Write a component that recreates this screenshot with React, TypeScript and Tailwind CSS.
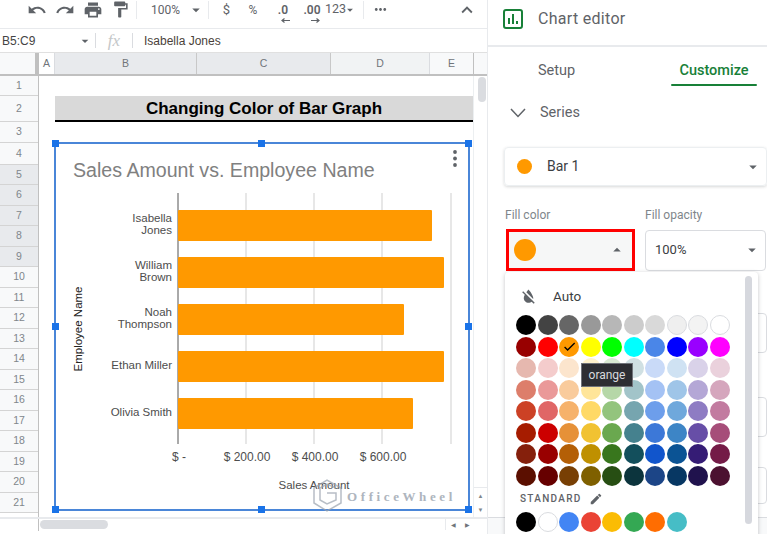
import React from "react";
import { MdUndo, MdRedo, MdPrint, MdFormatPaint, MdFormatColorReset, MdEdit, MdKeyboardArrowUp, MdMoreHoriz, MdCheck, MdArrowDropDown, MdArrowDropUp } from "react-icons/md";

const palette = [
  ["#000000","#434343","#666666","#999999","#b7b7b7","#cccccc","#d9d9d9","#efefef","#f3f3f3","#ffffff"],
  ["#980000","#ff0000","#ff9900","#ffff00","#00ff00","#00ffff","#4a86e8","#0000ff","#9900ff","#ff00ff"],
  ["#e6b8af","#f4cccc","#fce5cd","#fff2cc","#d9ead3","#d0e0e3","#c9daf8","#cfe2f3","#d9d2e9","#ead1dc"],
  ["#dd7e6b","#ea9999","#f9cb9c","#ffe599","#b6d7a8","#a2c4c9","#a4c2f4","#9fc5e8","#b4a7d6","#d5a6bd"],
  ["#cc4125","#e06666","#f6b26b","#ffd966","#93c47d","#76a5af","#6d9eeb","#6fa8dc","#8e7cc3","#c27ba0"],
  ["#a61c00","#cc0000","#e69138","#f1c232","#6aa84f","#45818e","#3c78d8","#3d85c6","#674ea7","#a64d79"],
  ["#85200c","#990000","#b45f06","#bf9000","#38761d","#134f5c","#1155cc","#0b5394","#351c75","#741b47"],
  ["#5b0f00","#660000","#783f04","#7f6000","#274e13","#0c343d","#1c4587","#073763","#20124d","#4c1130"],
];
const standard = ["#000000","#ffffff","#4285f4","#ea4335","#fbbc04","#34a853","#ff6d01","#46bdc6"];

const rows = [
  [1,20],[2,26],[3,21],[4,22],[5,20],[6,21],[7,20],[8,21],[9,20],[10,21],[11,20],[12,21],[13,20],[14,21],[15,20],[16,21],[17,20],[18,21],[19,20],[20,21],[21,20],
];

const bars = [
  [210, 432, ["Isabella", "Jones"]],
  [257, 444, ["William", "Brown"]],
  [304, 404, ["Noah", "Thompson"]],
  [351, 444, ["Ethan Miller"]],
  [398, 413, ["Olivia Smith"]],
] as const;

function Swatch({ color, check }: { color: string; check?: boolean }) {
  const light = color === "#ffffff" || color === "#f3f3f3" || color === "#efefef";
  return (
    <div
      className={`w-5 h-5 rounded-full flex items-center justify-center ${light ? "border border-[#dadce0]" : ""}`}
      style={{ backgroundColor: color }}
    >
      {check && <MdCheck className="text-[15px] text-black" />}
    </div>
  );
}

function Handle({ pos }: { pos: string }) {
  return <div className={`absolute w-[7px] h-[7px] bg-[#1a73e8] ${pos}`} />;
}

function DecimalIcon({ label, dir }: { label: string; dir: "left" | "right" }) {
  return (
    <div className="relative flex items-center justify-center text-[12px] font-semibold text-[#5f6368]">
      {label}
      <svg viewBox="0 0 9 5" className={`absolute -bottom-[4px] w-[9px] h-[5px] ${dir === "left" ? "left-[3px]" : "right-[1px]"}`}>
        {dir === "left" ? (
          <path d="M9 2.5H1.5M3.5 0.5L1 2.5L3.5 4.5" fill="none" stroke="#5f6368" strokeWidth="1.2" />
        ) : (
          <path d="M0 2.5H7.5M5.5 0.5L8 2.5L5.5 4.5" fill="none" stroke="#5f6368" strokeWidth="1.2" />
        )}
      </svg>
    </div>
  );
}

function ChartSvg() {
  return (
    <svg viewBox="55 143 414 367" className="absolute inset-0 w-full h-full overflow-visible">
      {[246, 314, 382, 451].map((x) => (
        <line key={x} x1={x} x2={x} y1={193} y2={444} stroke="#cfcfcf" strokeWidth="1" />
      ))}
      <line x1={178} x2={178} y1={193} y2={444} stroke="#555" strokeWidth="1" />
      {bars.map(([y, end, label]) => (
        <g key={y}>
          <rect x={178} y={y} width={end - 178} height={31} fill="#ff9900" rx="1" />
          {label.map((t, i) => (
            <text
              key={t}
              x={172}
              y={label.length === 1 ? y + 18 : y + 12 + i * 12}
              textAnchor="end"
              fontSize="11.5"
              fontFamily="Liberation Sans, sans-serif"
              fill="#4d4d4d"
            >
              {t}
            </text>
          ))}
        </g>
      ))}
      {[["$ -", 179], ["$ 200.00", 247], ["$ 400.00", 315], ["$ 600.00", 383]].map(([t, x]) => (
        <text key={t} x={x} y={461} textAnchor="middle" fontSize="12" fontFamily="Liberation Sans, sans-serif" fill="#4d4d4d">
          {t}
        </text>
      ))}
      <text x={73} y={177} fontSize="19.6" fontFamily="Liberation Sans, sans-serif" fill="#808080">
        Sales Amount vs. Employee Name
      </text>
      <text x={314} y={489} textAnchor="middle" fontSize="11.5" fontFamily="Liberation Sans, sans-serif" fill="#4d4d4d">
        Sales Amount
      </text>
      <text
        transform="translate(82 329) rotate(-90)"
        textAnchor="middle"
        fontSize="11.5"
        fontFamily="Liberation Sans, sans-serif"
        fill="#222"
      >
        Employee Name
      </text>
      <circle cx={455} cy={152} r={1.9} fill="#5f6368" />
      <circle cx={455} cy={158.5} r={1.9} fill="#5f6368" />
      <circle cx={455} cy={165} r={1.9} fill="#5f6368" />
      <g fill="none" stroke="#9aa3ae" strokeWidth="1.5" opacity="0.7">
        <path d="M314 488 L327 480 L341 488 L341 503 L327 511 L314 503 Z" />
        <path d="M336 488 L327 484 L320 488 L320 500 L327 504 L336 500 L336 493 L327 493" />
      </g>
      <text x={347} y={501} fontSize="13" letterSpacing="3.6" fontFamily="Liberation Serif, serif" fontWeight="700" fill="#9aa3ae" opacity="0.8">
        OfficeWheel
      </text>
    </svg>
  );
}

export default function App() {
  const tb = "flex items-center justify-center text-[#5f6368] shrink-0";
  return (
    <div className="flex w-[767px] h-[534px] overflow-hidden bg-white font-['Roboto',sans-serif]">
      {/* Sheet */}
      <div className="w-[487px] h-full flex flex-col shrink-0">
        <div className="h-[29px] flex items-center pb-[9px] pl-[23px] border-b border-[#e8eaed] shrink-0">
          <div className={`${tb} w-[28px]`}><MdUndo className="text-[20px]" /></div>
          <div className={`${tb} w-[28px]`}><MdRedo className="text-[20px]" /></div>
          <div className={`${tb} w-[27px]`}><MdPrint className="text-[20px]" /></div>
          <div className={`${tb} w-[28px]`}><MdFormatPaint className="text-[19px]" /></div>
          <div className="w-px h-[18px] bg-[#e8eaed] ml-[2px] shrink-0" />
          <div className="w-[50px] pl-[14px] text-[12px] text-[#5f6368] shrink-0">100%</div>
          <MdArrowDropDown className="text-[18px] text-[#5f6368] shrink-0" />
          <div className="w-px h-[18px] bg-[#e8eaed] ml-[3px] shrink-0" />
          <div className={`${tb} w-[35px] text-[13px]`}>$</div>
          <div className={`${tb} w-[18px] text-[12px]`}>%</div>
          <div className={`${tb} w-[42px]`}><DecimalIcon label=".0" dir="left" /></div>
          <div className={`${tb} w-[16px]`}><DecimalIcon label=".00" dir="right" /></div>
          <div className={`${tb} w-[24px] text-[12.5px] pl-[7px]`}>123</div>
          <MdArrowDropDown className="text-[14px] text-[#5f6368] -ml-[1px] shrink-0" />
          <div className="w-px h-[18px] bg-[#e8eaed] ml-[6px] shrink-0" />
          <MdMoreHoriz className="text-[17px] text-[#5f6368] ml-[8px] shrink-0" />
          <MdKeyboardArrowUp className="text-[22px] text-[#5f6368] ml-[67px] shrink-0" />
        </div>
        <div className="h-[24px] flex items-center border-b border-[#e0e0e0] text-[12px] text-[#444] shrink-0 font-['Liberation_Sans',sans-serif]">
          <div className="w-[95px] pl-[2px] flex items-center justify-between pr-[2px]">
            <span>B5:C9</span>
            <MdArrowDropDown className="text-[16px] text-[#5f6368]" />
          </div>
          <div className="w-px h-[15px] bg-[#dadce0]" />
          <div className="w-[36px] text-center font-['Liberation_Serif',serif] italic text-[17px] text-[#c4c7c9]">fx</div>
          <div className="w-px h-[15px] bg-[#dadce0]" />
          <div className="pl-[11px] text-[#4a3f3a]">Isabella Jones</div>
        </div>
        <div className="h-[23px] flex text-[10.5px] text-[#70757a] border-b-2 border-[#c0c0c0] shrink-0 font-['Liberation_Sans',sans-serif]">
          <div className="w-[39px] bg-[#f8f9fa] border-r-[4px] border-[#c0c0c0]" />
          <div className="w-[16px] flex items-center justify-center border-r border-[#dadce0]">A</div>
          <div className="w-[142px] flex items-center justify-center bg-[#e8eaed] border-r border-[#c8c8c8]">B</div>
          <div className="w-[134px] flex items-center justify-center bg-[#e8eaed] border-r border-[#c8c8c8]">C</div>
          <div className="w-[99px] flex items-center justify-center bg-[#f1f3f4] border-r border-[#dadce0]">D</div>
          <div className="w-[44px] flex items-center justify-center bg-[#f8f9fa] border-r border-[#c0c0c0]">E</div>
          <div className="flex-1 bg-[#f8f9fa]" />
        </div>
        <div className="flex h-[441px] shrink-0">
          <div className="w-[39px] border-r border-[#c0c0c0] shrink-0 text-[10.5px] text-[#80868b] font-['Liberation_Sans',sans-serif]">
            {rows.map(([n, h]) => (
              <div
                key={n}
                className={`flex items-center justify-center border-b border-[#d4d4d4] ${n >= 5 && n <= 9 ? "bg-[#e8eaed]" : "bg-[#f8f9fa]"}`}
                style={{ height: h }}
              >
                {n}
              </div>
            ))}
          </div>
          <div className="relative w-[434px] shrink-0 bg-white">
            <div className="ml-[16px] w-[418px] mt-[20px] h-[26px] pt-[2px] bg-[#d9d9d9] border-b-2 border-black flex items-center justify-center text-[17px] font-bold text-black font-['Liberation_Sans',sans-serif]">
              Changing Color of Bar Graph
            </div>
            <div className="absolute left-[16px] top-[67px] w-[414px] h-[367px]">
              <div className="absolute -inset-[1px] border-2 border-[#4a86d8]" />
              <ChartSvg />
              <Handle pos="-left-[3px] -top-[3px]" />
              <Handle pos="left-[203px] -top-[3px]" />
              <Handle pos="-right-[3px] -top-[3px]" />
              <Handle pos="-left-[3px] top-[180px]" />
              <Handle pos="-right-[3px] top-[180px]" />
              <Handle pos="-left-[3px] -bottom-[3px]" />
              <Handle pos="left-[203px] -bottom-[3px]" />
              <Handle pos="-right-[3px] -bottom-[3px]" />
            </div>
          </div>
          <div className="flex-1 flex flex-col border-l border-[#eceff1] bg-white relative">
            <div className="mt-[1px] ml-[4px] w-[8px] h-[25px] rounded-full bg-[#dadce0]" />
            <div className="mt-auto h-[30px] border-t border-[#e8eaed] flex flex-col items-center justify-around text-[#80868b] text-[6px]">
              <span>▲</span>
              <span>▼</span>
            </div>
          </div>
        </div>
        <div className="flex-1 flex items-start border-t-2 border-[#e8eaed] bg-white">
          <div className="w-[39px] h-[12px] border-r border-[#c0c0c0]" />
          <div className="ml-[1px] mt-[1px] w-[68px] h-[9px] rounded-full bg-[#dadce0]" />
          <div className="ml-auto flex w-[30px] mr-[12px] h-[11px] items-center justify-around text-[6px] text-[#70757a] border-l border-[#e8eaed]">
            <span>◀</span>
            <span>▶</span>
          </div>
        </div>
      </div>

      {/* Panel */}
      <div className="relative w-[280px] h-full border-l border-[#e8eaed] shrink-0 text-[#3c4043] overflow-hidden">
        <div className="h-[47px] border-b-2 border-[#e8eaed] flex items-center pl-[15px] pb-[7px]">
          <svg viewBox="0 0 20 20" className="w-[20px] h-[20px] shrink-0">
            <rect x="1" y="1" width="18" height="18" rx="2" fill="none" stroke="#188038" strokeWidth="2" />
            <rect x="5" y="9" width="2" height="6" fill="#188038" />
            <rect x="9" y="5" width="2" height="10" fill="#188038" />
            <rect x="13" y="12" width="2" height="3" fill="#188038" />
          </svg>
          <span className="ml-[15px] text-[16px] tracking-[0.3px] text-[#5f6368]">Chart editor</span>
        </div>
        <div className="flex h-[39px] text-[14.5px]">
          <div className="w-[183px] pl-[50px] pt-[13px] text-[#5f6368]">Setup</div>
          <div className="relative w-[86px] pt-[13px] text-center text-[#188038] font-medium">
            Customize
            <div className="absolute left-0 right-0 bottom-0 h-[2px] rounded bg-[#188038]" />
          </div>
        </div>
        <div className="flex items-center h-[54px] pl-[22px] text-[14.5px] text-[#5f6368]">
          <svg viewBox="0 0 16 10" className="w-[16px] h-[10px]" fill="none" stroke="#5f6368" strokeWidth="1.5">
            <path d="M1 1 L8 8.5 L15 1" />
          </svg>
          <span className="ml-[14px]">Series</span>
        </div>
        <div className="ml-[16px] w-[263px] h-[39px] mt-[7px] rounded border border-[#eceff1] shadow-[0_1px_3px_rgba(60,64,67,0.2)] flex items-center pl-[12px]">
          <div className="w-[15px] h-[15px] rounded-full bg-[#ff9900]" />
          <span className="ml-[15px] text-[14px]">Bar 1</span>
          <MdArrowDropDown className="ml-auto mr-[4px] text-[18px] text-[#5f6368]" />
        </div>
        <div className="flex mt-[20px] text-[12px] text-[#80868b]">
          <div className="w-[157px] pl-[17px]">Fill color</div>
          <div>Fill opacity</div>
        </div>
        <div className="flex mt-[5px] h-[42px]">
          <div className="ml-[18px] w-[129px] h-[42px] border-[3px] border-[#ff0000] bg-[#f6f7f7] flex items-center pl-[5px]">
            <div className="w-[22px] h-[22px] rounded-full bg-[#ff9900]" />
            <MdArrowDropUp className="ml-auto mr-[6px] text-[18px] text-[#5f6368]" />
          </div>
          <div className="ml-[10px] w-[121px] h-[41px] mt-[1px] pb-[2px] rounded border border-[#dadce0] flex items-center pl-[9px] text-[13px]">
            100%
            <MdArrowDropDown className="ml-auto mr-[4px] text-[18px] text-[#5f6368]" />
          </div>
        </div>
        <div className="ml-auto mt-[42px] w-[20px] h-[40px] rounded border border-[#dadce0]" />
        <div className="ml-auto mt-[44px] w-[20px] h-[40px] rounded border border-[#dadce0]" />
        <div className="ml-auto mt-[30px] w-[20px] h-[37px] rounded border border-[#dadce0]" />
        <div className="mt-[13px] h-[20px] border-t border-[#dadce0] bg-[#f8f9fa]" />

        {/* Colour popup */}
        <div className="absolute left-[17px] top-[272px] w-[253px] h-[270px] bg-white rounded shadow-[0_1px_4px_rgba(60,64,67,0.3)] pl-[11px]">
          <div className="flex items-center h-[43px] pl-[3px] pt-[6px]">
            <MdFormatColorReset className="text-[19px] text-[#5f6368]" />
            <span className="ml-[15px] text-[13.5px] text-[#3c4043]">Auto</span>
          </div>
          <div className="grid grid-cols-[repeat(10,20px)] gap-[1.5px]">
            {palette.flat().map((c, i) => (
              <Swatch key={i} color={c} check={i === 12} />
            ))}
          </div>
          <div className="flex items-center h-[22px] mt-[2px] pl-[4px] text-[10px] font-medium tracking-[1.3px] text-[#5f6368]">
            STANDARD
            <MdEdit className="ml-[7px] text-[14px]" />
          </div>
          <div className="flex gap-[1.5px] mt-[2px]">
            {standard.map((c) => (
              <Swatch key={c} color={c} />
            ))}
          </div>
          <div className="absolute left-[240px] top-[4px] w-[7px] h-[248px] rounded-full bg-[#d6d8de]" />
          <div className="absolute left-[76px] top-[91px] w-[52px] h-[24px] bg-[#2d2e33] border border-[#70737a] text-[12px] text-[#d8dadd] flex items-center justify-center">
            orange
          </div>
        </div>
      </div>
    </div>
  );
}
